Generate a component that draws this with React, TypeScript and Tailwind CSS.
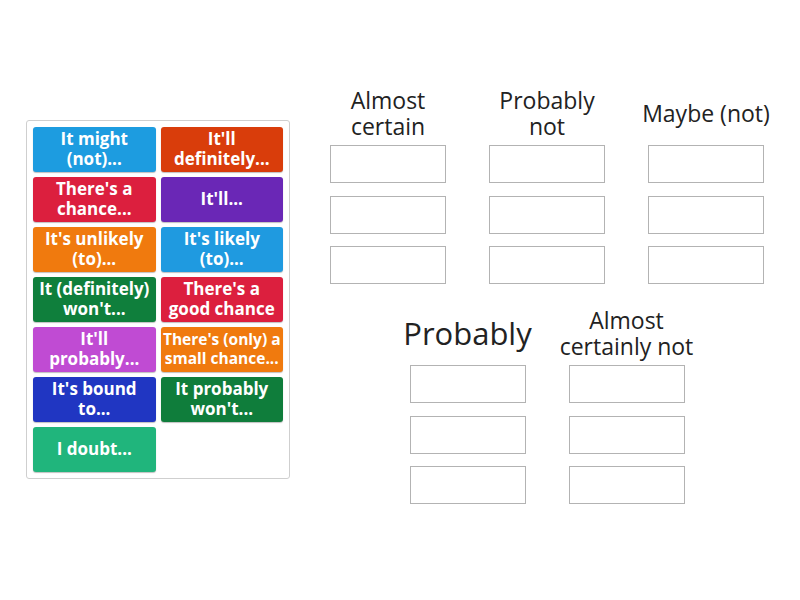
import React from 'react';

interface Tile {
    lines: string[];
    color: string;
    small?: boolean;
}

const tiles: Tile[] = [
    { lines: ['It might', '(not)...'], color: 'bg-[#1d9ce0]' },
    { lines: ["It'll", 'definitely...'], color: 'bg-[#d93d0b]' },
    { lines: ["There's a", 'chance...'], color: 'bg-[#dc1f3e]' },
    { lines: ["It'll..."], color: 'bg-[#6a27b6]' },
    { lines: ["It's unlikely", '(to)...'], color: 'bg-[#f07a0e]' },
    { lines: ["It's likely", '(to)...'], color: 'bg-[#1f9ae0]' },
    { lines: ['It (definitely)', "won't..."], color: 'bg-[#0f7f3c]' },
    { lines: ["There's a", 'good chance'], color: 'bg-[#dc1f3e]' },
    { lines: ["It'll", 'probably...'], color: 'bg-[#c04bd3]' },
    { lines: ["There's (only) a", 'small chance...'], color: 'bg-[#f07a0e]', small: true },
    { lines: ["It's bound", 'to...'], color: 'bg-[#2036c2]' },
    { lines: ['It probably', "won't..."], color: 'bg-[#0f7d3b]' },
    { lines: ['I doubt...'], color: 'bg-[#20b57c]' },
];

function Column({ title, big }: { title: string[]; big?: boolean }) {
    return (
        <div className="w-[159px] flex flex-col items-center">
            <div
                className={`h-[56px] flex flex-col items-center justify-center text-center text-[#222] font-normal ${
                    big ? 'text-[31px] leading-[38px]' : 'text-[23px] leading-[26px]'
                }`}
            >
                {title.map((t) => (
                    <span key={t} className="whitespace-nowrap">{t}</span>
                ))}
            </div>
            <div className="flex flex-col gap-[12.5px] mt-[4px]">
                {[0, 1, 2].map((i) => (
                    <div key={i} className="w-[116px] h-[38px] border border-[#b3b3b3] bg-white" />
                ))}
            </div>
        </div>
    );
}

export default function App() {
    return (
        <div
            className="w-[800px] h-[600px] bg-white flex"
            style={{ fontFamily: '"Open Sans", "Liberation Sans", sans-serif' }}
        >
            {/* Word bank */}
            <div className="ml-[26px] mt-[120px] w-[264px] h-[359px] border border-[#cfcfcf] rounded-[3px] p-[6px] self-start">
                <div className="grid grid-cols-2 gap-[5px]">
                    {tiles.map((t) => (
                        <div
                            key={t.lines.join(' ')}
                            className={`${t.color} h-[45px] pb-[2px] rounded-[3px] flex flex-col items-center justify-center text-white font-bold text-center shadow-[0_1px_1px_rgba(0,0,0,0.25)] ${
                                t.small ? 'text-[15.5px] leading-[19px]' : 'text-[17px] leading-[20px]'
                            }`}
                        >
                            {t.lines.map((l) => (
                                <span key={l} className="whitespace-nowrap">{l}</span>
                            ))}
                        </div>
                    ))}
                </div>
            </div>

            {/* Categories */}
            <div className="flex-1 flex flex-col items-center pt-[85px] pl-[4px]">
                <div className="flex">
                    <Column title={['Almost', 'certain']} />
                    <Column title={['Probably', 'not']} />
                    <Column title={['Maybe (not)']} />
                </div>
                <div className="flex mt-[21px]">
                    <Column title={['Probably']} big />
                    <Column title={['Almost', 'certainly not']} />
                </div>
            </div>
        </div>
    );
}
